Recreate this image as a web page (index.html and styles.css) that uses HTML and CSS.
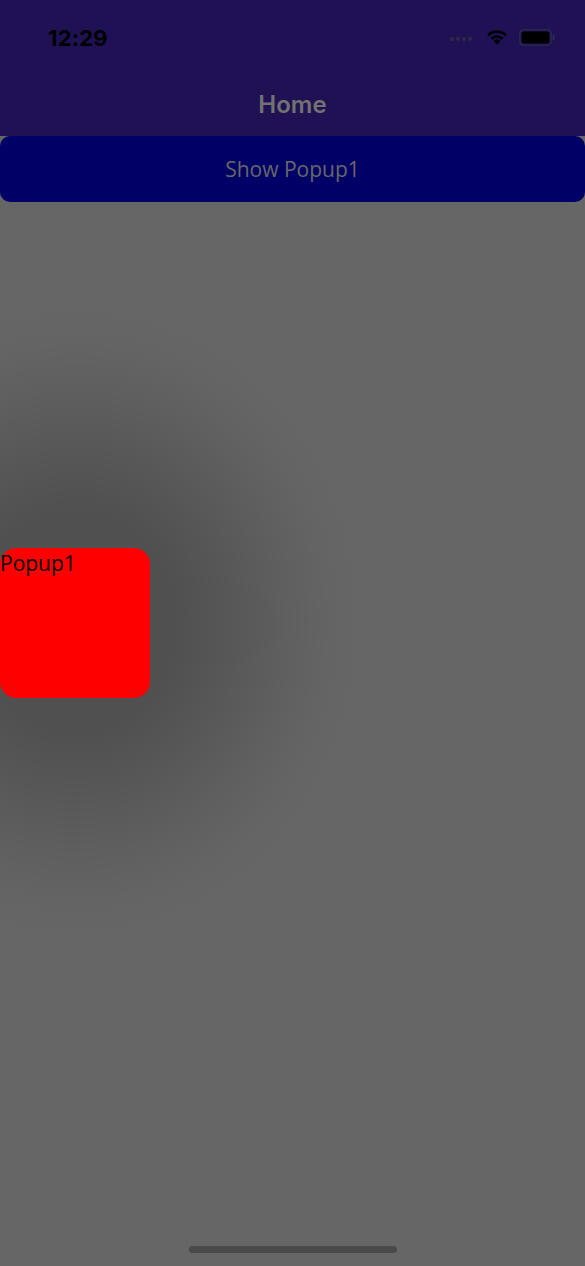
FILE: index.html
```html
<!DOCTYPE html>
<html>
<head>
<meta charset="utf-8">
<link rel="stylesheet" href="styles.css">
</head>
<body>
<div class="screen">
  <header class="topbar">
    <div class="status">
      <span class="time">12:29</span>
      <div class="status-icons">
        <svg class="signal" width="24" height="6" viewBox="0 0 24 6">
          <circle cx="3" cy="3" r="2" fill="#2a2a4a"/>
          <circle cx="9" cy="3" r="2" fill="#2a2a4a"/>
          <circle cx="15" cy="3" r="2" fill="#2a2a4a"/>
          <circle cx="21" cy="3" r="2" fill="#2a2a4a"/>
        </svg>
        <svg class="wifi" width="24" height="18" viewBox="0 0 24 18">
          <path d="M12 17.5 L8.6 13.9 A5 5 0 0 1 15.4 13.9 Z" fill="#000"/>
          <path d="M5.6 10.8 A9.2 9.2 0 0 1 18.4 10.8 L16.6 12.7 A6.6 6.6 0 0 0 7.4 12.7 Z" fill="#000"/>
          <path d="M2.2 7.3 A14 14 0 0 1 21.8 7.3 L20 9.2 A11.4 11.4 0 0 0 4 9.2 Z" fill="#000"/>
        </svg>
        <svg class="battery" width="37" height="17" viewBox="0 0 37 17">
          <rect x="0.8" y="0.8" width="31.4" height="15.4" rx="4" fill="none" stroke="#2c2c4e" stroke-width="1.3"/>
          <rect x="2.6" y="2.6" width="27.8" height="11.8" rx="2.5" fill="#000"/>
          <rect x="33.5" y="5.5" width="2" height="6" rx="1" fill="#2c2c4e"/>
        </svg>
      </div>
    </div>
    <div class="nav">
      <span class="nav-title">Home</span>
    </div>
  </header>
  <button class="show-btn">Show Popup1</button>
  <main class="content"></main>
  <div class="home-indicator"></div>

  <div class="popup-shadow"></div>
  <div class="popup">
    <span class="popup-label">Popup1</span>
  </div>
</div>
</body>
</html>
```

FILE: styles.css
```css
* { box-sizing: border-box; }
html, body {
  margin: 0;
  padding: 0;
  background: #666666;
}
.screen {
  position: relative;
  width: 585px;
  height: 1266px;
  display: flex;
  flex-direction: column;
  background: #666666;
  overflow: hidden;
}
.topbar {
  background: #201154;
  height: 136px;
  display: flex;
  flex-direction: column;
}
.status {
  height: 74px;
  display: flex;
  align-items: center;
  justify-content: space-between;
  padding: 0 29px 0 48px;
}
.time {
  font-family: Inter, "Liberation Sans", sans-serif;
  font-weight: 700;
  font-size: 22px;
  color: #000;
  letter-spacing: 0.2px;
  margin-top: 1px;
}
.status-icons {
  display: flex;
  align-items: center;
  gap: 10px;
}
.signal { margin-top: 4px; margin-right: 2px; }
.wifi { margin-top: -2px; }
.nav {
  flex: 1;
  display: flex;
  align-items: center;
  justify-content: center;
  padding-bottom: 2px;
}
.nav-title {
  font-family: Inter, "Liberation Sans", sans-serif;
  font-weight: 600;
  font-size: 24px;
  color: #727272;
}
.show-btn {
  height: 66px;
  width: 100%;
  border: none;
  border-radius: 10px;
  background: #000066;
  color: #686868;
  font-family: "Open Sans", sans-serif;
  font-size: 21px;
  padding: 0;
  margin: 0;
}
.content {
  flex: 1;
}
.home-indicator {
  align-self: center;
  width: 208px;
  height: 7px;
  border-radius: 4px;
  background: #4a4a4a;
  margin-bottom: 13px;
}
.popup-shadow {
  position: absolute;
  left: -215px;
  top: 302px;
  width: 580px;
  height: 640px;
  background: radial-gradient(ellipse closest-side,
    rgba(0, 0, 0, 0.22) 0%,
    rgba(0, 0, 0, 0.21) 36%,
    rgba(0, 0, 0, 0.14) 55%,
    rgba(0, 0, 0, 0.07) 73%,
    rgba(0, 0, 0, 0.02) 88%,
    rgba(0, 0, 0, 0) 100%);
  pointer-events: none;
}
.popup {
  position: absolute;
  left: 0;
  top: 548px;
  width: 150px;
  height: 150px;
  background: #ff0000;
  border-radius: 16px;
}
.popup-label {
  display: block;
  font-family: "Open Sans", sans-serif;
  font-size: 21px;
  line-height: 30px;
  color: #000;
}
```
